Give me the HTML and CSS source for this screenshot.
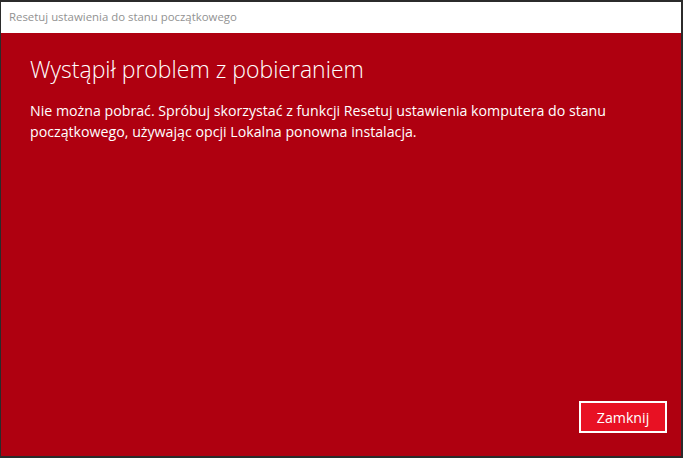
FILE: index.html
```html
<!DOCTYPE html>
<html lang="pl">

<head>
  <meta charset="UTF-8">
  <meta name="viewport" content="width=device-width, initial-scale=1.0">
  <title>Resetuj ustawienia do stanu początkowego</title>
  <link rel="stylesheet" href="styles.css">
</head>

<body>

  <div class="window">
    <div class="title-bar">Resetuj ustawienia do stanu początkowego</div>
    <div class="content">
      <h1>Wystąpił problem z pobieraniem</h1>
      <p class="message">Nie można pobrać. Spróbuj skorzystać z funkcji Resetuj ustawienia komputera do stanu początkowego, używając opcji Lokalna ponowna instalacja.</p>
      <div class="actions">
        <button type="button" class="close-btn">Zamknij</button>
      </div>
    </div>
  </div>

</body>

</html>
```

FILE: styles.css
```css
body {
  font-family: "Open Sans", "Noto Sans", Arial, sans-serif;
  background-color: #2b2b2b;
  margin: 0;
  padding: 0;
}

.window {
  margin: 2px 2px 2px 1px;
  height: 454px;
  display: flex;
  flex-direction: column;
}

.title-bar {
  height: 31px;
  flex-shrink: 0;
  background-color: white;
  color: #929292;
  font-size: 11.4px;
  line-height: 30px;
  padding-left: 8px;
}

.content {
  flex: 1;
  background-color: #af0010;
  color: white;
  padding: 20px 14px 23px 29px;
  display: flex;
  flex-direction: column;
}

.content h1 {
  margin: 0;
  font-size: 23px;
  font-weight: 300;
  line-height: 32px;
}

.message {
  margin: 15px 0 0 0;
  max-width: 590px;
  font-size: 14.2px;
  line-height: 21px;
}

.actions {
  margin-top: auto;
  display: flex;
  justify-content: flex-end;
}

.close-btn {
  width: 88px;
  height: 32px;
  background-color: #e81123;
  color: white;
  border: 2px solid white;
  font-family: inherit;
  font-size: 14.2px;
  cursor: pointer;
}
```
